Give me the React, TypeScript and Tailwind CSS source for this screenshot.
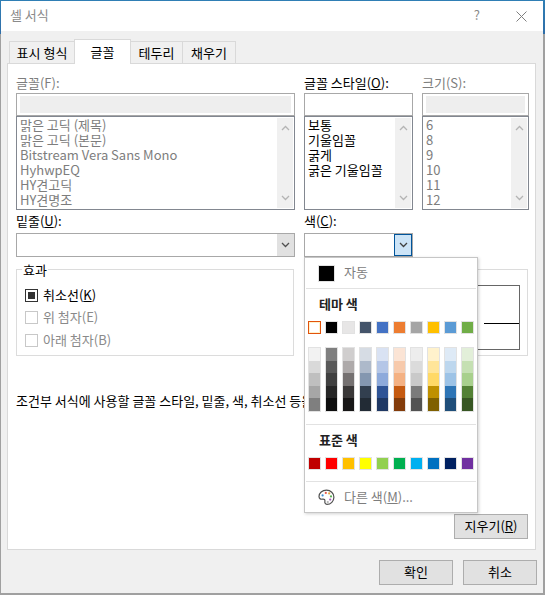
import React from "react";

const themeRow = ["bg-[#000000]", "bg-[#e7e6e6]", "bg-[#44546a]", "bg-[#4472c4]", "bg-[#ed7d31]", "bg-[#a5a5a5]", "bg-[#ffc000]", "bg-[#5b9bd5]", "bg-[#70ad47]"];
const standardRow = ["bg-[#c00000]", "bg-[#ff0000]", "bg-[#ffc000]", "bg-[#ffff00]", "bg-[#92d050]", "bg-[#00b050]", "bg-[#00b0f0]", "bg-[#0070c0]", "bg-[#002060]", "bg-[#7030a0]"];
const shades = [
  ["bg-[#f2f2f2]", "bg-[#d9d9d9]", "bg-[#bfbfbf]", "bg-[#a6a6a6]", "bg-[#7f7f7f]"],
  ["bg-[#7f7f7f]", "bg-[#595959]", "bg-[#404040]", "bg-[#262626]", "bg-[#0d0d0d]"],
  ["bg-[#d0cece]", "bg-[#aeaaaa]", "bg-[#757171]", "bg-[#3a3838]", "bg-[#171616]"],
  ["bg-[#d6dce4]", "bg-[#adb9ca]", "bg-[#8497b0]", "bg-[#323f4f]", "bg-[#222b35]"],
  ["bg-[#d9e2f3]", "bg-[#b4c6e7]", "bg-[#8eaadb]", "bg-[#2f5496]", "bg-[#1f3864]"],
  ["bg-[#fbe4d5]", "bg-[#f7caac]", "bg-[#f4b183]", "bg-[#c55a11]", "bg-[#833c0b]"],
  ["bg-[#ededed]", "bg-[#dbdbdb]", "bg-[#c9c9c9]", "bg-[#7b7b7b]", "bg-[#525252]"],
  ["bg-[#fff2cc]", "bg-[#ffe599]", "bg-[#ffd966]", "bg-[#bf9000]", "bg-[#7f6000]"],
  ["bg-[#deeaf6]", "bg-[#bdd7ee]", "bg-[#9dc3e6]", "bg-[#2e75b5]", "bg-[#1f4e79]"],
  ["bg-[#e2efd9]", "bg-[#c5e0b3]", "bg-[#a8d08d]", "bg-[#538135]", "bg-[#375623]"],
];

function Chevron({ up = false, color = "#b4b4b4" }: { up?: boolean; color?: string }) {
  return (
    <svg width="9" height="6" viewBox="0 0 9 6" fill="none">
      <path d={up ? "M1 5 L4.5 1.5 L8 5" : "M1 1 L4.5 4.5 L8 1"} stroke={color} strokeWidth="1.3" />
    </svg>
  );
}

function ListBox({ items, disabled }: { items: string[]; disabled?: boolean }) {
  return (
    <div className="flex h-[94px] border border-[#828790] bg-white p-[1px]">
      <div className={`-mt-px flex-1 pl-[2px] ${disabled ? "text-[#7d7d7d]" : "text-black"}`}>
        {items.map((t) => (
          <div key={t} className="h-[15px] whitespace-nowrap">{t}</div>
        ))}
      </div>
      <div className="flex w-[16px] flex-col items-center justify-between bg-[#f0f0f0] py-[7px]">
        <Chevron up />
        <Chevron />
      </div>
    </div>
  );
}

function TextBox({ disabled }: { disabled?: boolean }) {
  return (
    <div className="h-[23px] border border-[#a8a8a8] bg-white p-[2px_3px]">
      <div className={`h-full ${disabled ? "bg-[#eeeeee]" : "bg-white"}`} />
    </div>
  );
}

function Check({ label, disabled, checked, k }: { label: string; disabled?: boolean; checked?: boolean; k?: string }) {
  return (
    <div className={`flex h-[22.5px] items-center gap-[5px] ${disabled ? "text-[#8a8a8a]" : "text-black"}`}>
      <div className={`flex h-[13px] w-[13px] items-center justify-center border bg-white ${disabled ? "border-[#c8c8c8]" : "border-[#333333]"}`}>
        {checked && <div className="h-[7px] w-[7px] bg-[#333333]" />}
      </div>
      <span className="pb-[2px]">
        {label}
        {k && <>(<u>{k}</u>)</>}
      </span>
    </div>
  );
}

function Swatch({ c }: { c: string }) {
  return <div className={`h-[13px] w-[13px] border border-[#e2e2e2] ${c}`} />;
}

function Palette() {
  return (
    <svg width="17" height="17" viewBox="0 0 17 17" fill="none">
      <path
        d="M8.5 1.2C4.2 1.2 1 4 1 7.6c0 2.4 2 2.8 3.6 2.6 1.6-.2 2.6.5 2.3 1.9-.3 1.5.2 3.3 2.1 3.3 3.7 0 6.9-3.2 6.9-7.2 0-3.8-3.2-7-7.4-7z"
        stroke="#505050"
        strokeWidth="1.2"
      />
      <circle cx="4.6" cy="6.4" r="1.1" fill="#3f8fd8" />
      <circle cx="7.8" cy="3.9" r="1.1" fill="#e35b4f" />
      <circle cx="11.2" cy="4.4" r="1.1" fill="#e8a33a" />
      <circle cx="13" cy="7.4" r="1.1" fill="#5dae56" />
      <circle cx="12.2" cy="10.6" r="1.1" fill="#a95ac0" />
      <circle cx="9.8" cy="13" r="1.1" fill="#b0b0b0" />
    </svg>
  );
}

function ColorPopup() {
  return (
    <div className="absolute left-[304px] top-[257px] z-20 h-[256px] w-[174px] border border-[#c6c6c6] bg-white shadow-[1px_1px_3px_rgba(0,0,0,0.18)]">
      <div className="flex h-[30px] items-center pl-[13px]">
        <div className="h-[17px] w-[17px] border border-[#e2e2e2] bg-black" />
        <span className="ml-[9px] pb-[3px] text-[#7d7d7d]">자동</span>
      </div>
      <div className="mx-px h-px bg-[#e2e2e2]" />
      <div className="flex h-[30px] items-center pb-[2px] pl-[14px] font-bold text-[#222222]">테마 색</div>
      <div className="mt-[2px] flex gap-[4px] pl-[3px]">
        <div className="h-[13px] w-[13px] border border-[#e2530c] bg-white shadow-[inset_0_0_0_1px_#fff2cc]" />
        {themeRow.map((c) => (
          <Swatch key={c} c={c} />
        ))}
      </div>
      <div className="mt-[13px] flex gap-[4px] pl-[3px]">
        {shades.map((col, i) => (
          <div key={i} className="flex h-[65px] w-[13px] flex-col border border-[#e2e2e2]">
            {col.map((c) => (
              <div key={c} className={`flex-1 ${c}`} />
            ))}
          </div>
        ))}
      </div>
      <div className="mx-px mt-[12px] h-px bg-[#e2e2e2]" />
      <div className="flex h-[30px] items-center pb-[2px] pl-[14px] font-bold text-[#222222]">표준 색</div>
      <div className="mt-[2px] flex gap-[4px] pl-[3px]">
        {standardRow.map((c) => (
          <Swatch key={c} c={c} />
        ))}
      </div>
      <div className="mx-px mt-[11px] h-px bg-[#e2e2e2]" />
      <div className="flex h-[30px] items-center pl-[13px]">
        <Palette />
        <span className="ml-[9px] pb-[2px] text-[#7d7d7d]">
          다른 색(<u>M</u>)...
        </span>
      </div>
    </div>
  );
}

function Tab({ label, w, active }: { label: string; w: string; active?: boolean }) {
  return (
    <div
      className={`relative flex items-center justify-center border-t border-r border-[#d9d9d9] pb-[1px] text-black ${w} ${
        active ? "z-10 -mb-px h-[25px] border-l bg-white" : "h-[22px] bg-[#f0f0f0]"
      }`}
    >
      {label}
    </div>
  );
}

function Button({ children }: { children: React.ReactNode }) {
  return (
    <div className="flex h-[25px] w-[74px] items-center justify-center border border-[#adadad] bg-[#e1e1e1] pb-[2px] text-black">
      {children}
    </div>
  );
}

export default function App() {
  return (
    <div className="relative h-[595px] w-[545px] overflow-hidden bg-[linear-gradient(to_bottom,#2f7fb5_0,#2f6ea8_34px,#a0a0a0_34px)] pb-[2px] pl-px pr-[2px] pt-px font-['Noto_Sans_CJK_KR',sans-serif] text-[13px] leading-[15px]">
      <div className="flex h-full flex-col bg-[#f0f0f0]">
        <div className="flex h-[30px] shrink-0 items-center justify-between bg-white pl-[9px] pr-[16px] text-[#8a8a8a]">
          <span className="pb-[3px]">셀 서식</span>
          <div className="flex items-center gap-[36px]">
            <span className="pb-[3px]">?</span>
            <svg width="11" height="11" viewBox="0 0 11 11" fill="none">
              <path d="M0.5 0.5 L10.5 10.5 M10.5 0.5 L0.5 10.5" stroke="#7f7f7f" strokeWidth="1" />
            </svg>
          </div>
        </div>

        <div className="flex items-end pl-[8px] pt-[8px]">
          <Tab label="표시 형식" w="w-[66px] border-l" />
          <Tab label="글꼴" w="w-[57px] -ml-px" active />
          <Tab label="테두리" w="w-[52px]" />
          <Tab label="채우기" w="w-[53px]" />
        </div>

        <div className="ml-[6px] flex h-[487px] w-[529px] flex-col border border-[#d9d9d9] bg-white pl-[8px] pt-[10px]">
          <div className="grid grid-cols-[279px_109px_107px] gap-x-[9px]">
            <div>
              <div className="flex h-[19px] items-center pb-[2px] text-[#7d7d7d]">글꼴(F):</div>
              <TextBox disabled />
              <ListBox
                disabled
                items={["맑은 고딕 (제목)", "맑은 고딕 (본문)", "Bitstream Vera Sans Mono", "HyhwpEQ", "HY견고딕", "HY견명조"]}
              />
            </div>
            <div>
              <div className="flex h-[19px] items-center pb-[2px] text-black">
                <span>글꼴 스타일(<u>O</u>):</span>
              </div>
              <TextBox />
              <ListBox items={["보통", "기울임꼴", "굵게", "굵은 기울임꼴"]} />
            </div>
            <div>
              <div className="flex h-[19px] items-center pb-[2px] text-[#7d7d7d]">크기(S):</div>
              <TextBox disabled />
              <ListBox disabled items={["6", "8", "9", "10", "11", "12"]} />
            </div>
          </div>

          <div className="grid grid-cols-[279px_109px] gap-x-[9px]">
            <div>
              <div className="flex h-[23px] items-center pb-[2px] text-black">
                <span>밑줄(<u>U</u>):</span>
              </div>
              <div className="flex h-[24px] justify-end border border-[#a8a8a8] bg-white">
                <div className="flex w-[17px] items-center justify-center bg-[#e1e1e1]">
                  <Chevron color="#505050" />
                </div>
              </div>
            </div>
            <div>
              <div className="flex h-[23px] items-center pb-[2px] text-black">
                <span>색(<u>C</u>):</span>
              </div>
              <div className="flex h-[24px] justify-end border border-[#a8a8a8] bg-white">
                <div className="flex w-[18px] items-center justify-center border border-[#00549a] bg-[#cce4f7]">
                  <Chevron color="#404040" />
                </div>
              </div>
            </div>
          </div>

          <div className="mt-[5px] flex">
            <fieldset className="h-[94px] w-[278px] border border-[#dcdcdc] pl-[8px]">
              <legend className="-ml-[3px] px-px text-black">효과</legend>
              <div className="pt-[7px]">
                <Check label="취소선" k="K" checked />
                <Check label="위 첨자(E)" disabled />
                <Check label="아래 첨자(B)" disabled />
              </div>
            </fieldset>
            <fieldset className="ml-[11px] h-[94px] w-[223px] border border-[#dcdcdc] px-[7px]">
              <legend className="ml-[6px] px-px text-black">미리 보기</legend>
              <div className="mt-[8px] flex h-[65px] items-center justify-end border border-[#666666] bg-white pt-[11px]">
                <div className="h-px w-[35px] bg-black" />
              </div>
            </fieldset>
          </div>

          <div className="mt-[37px] w-[296px] whitespace-nowrap text-black">
            조건부 서식에 사용할 글꼴 스타일, 밑줄, 색, 취소선 등을 설정할
          </div>

          <div className="mt-[106px] flex w-[512px] justify-end">
            <Button>
              <span>지우기(<u>R</u>)</span>
            </Button>
          </div>
        </div>

        <div className="flex justify-end gap-[10px] pr-[6px] pt-[10px]">
          <Button>확인</Button>
          <Button>취소</Button>
        </div>
      </div>
      <ColorPopup />
    </div>
  );
}
